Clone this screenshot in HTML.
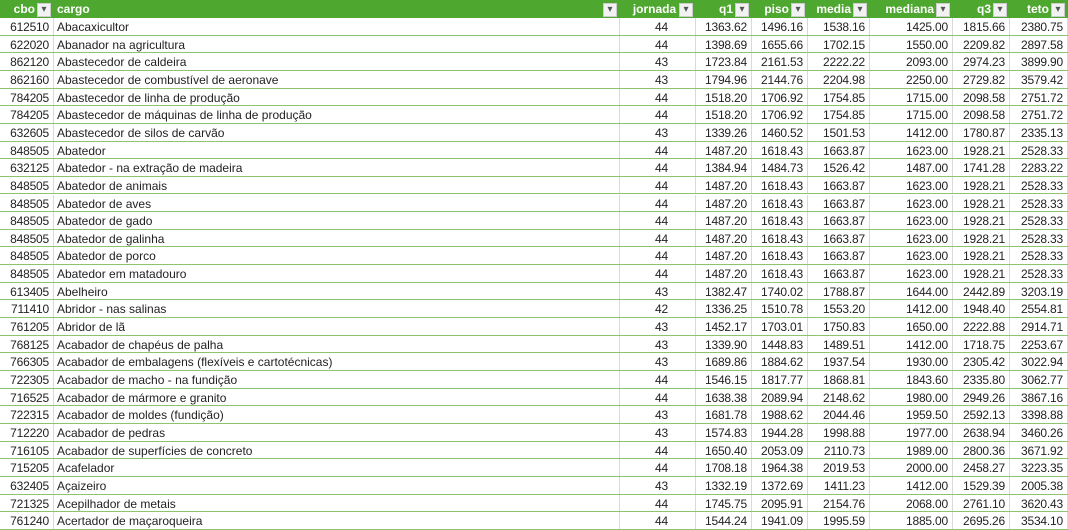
<!DOCTYPE html>
<html><head><meta charset="utf-8"><style>
*{margin:0;padding:0;box-sizing:border-box}
body{width:1068px;height:526px;overflow:hidden;background:#fff;font-family:"Liberation Sans",Arial,sans-serif;font-size:12px;color:#222;position:relative}
.r{position:absolute;left:0;width:1068px;display:grid;grid-template-columns:54px 566px 76px 56px 56px 62px 83px 57px 58px;border-bottom:1px solid #8cc56e}
.r div{border-right:1px solid #d9d9d9;padding:1px 4px 0;line-height:17px;white-space:nowrap;overflow:hidden;text-align:right;letter-spacing:-0.2px}
.r div:nth-child(2){text-align:left;padding-left:3px;letter-spacing:0}
.r div:nth-child(3){text-align:center;padding-left:12px}
.h{top:0;height:18px;background:#4ea72e;color:#fff;font-weight:bold;border-bottom:none}
.h div{border-right:none;position:relative;padding:0 19px 0 3px;line-height:18px;letter-spacing:0}
.h div::after{content:"▾";position:absolute;right:3px;top:3px;width:12px;height:12px;background:#f2f2f2;color:#555;font-size:10px;line-height:12px;text-align:center;border:1px solid #ccc;font-weight:normal}
</style></head><body>
<div class="r h"><div>cbo</div><div>cargo</div><div>jornada</div><div>q1</div><div>piso</div><div>media</div><div>mediana</div><div>q3</div><div>teto</div></div>
<div id="t"></div>
<script>
var d=`612510|Abacaxicultor|44|1363.62|1496.16|1538.16|1425.00|1815.66|2380.75
622020|Abanador na agricultura|44|1398.69|1655.66|1702.15|1550.00|2209.82|2897.58
862120|Abastecedor de caldeira|43|1723.84|2161.53|2222.22|2093.00|2974.23|3899.90
862160|Abastecedor de combustível de aeronave|43|1794.96|2144.76|2204.98|2250.00|2729.82|3579.42
784205|Abastecedor de linha de produção|44|1518.20|1706.92|1754.85|1715.00|2098.58|2751.72
784205|Abastecedor de máquinas de linha de produção|44|1518.20|1706.92|1754.85|1715.00|2098.58|2751.72
632605|Abastecedor de silos de carvão|43|1339.26|1460.52|1501.53|1412.00|1780.87|2335.13
848505|Abatedor|44|1487.20|1618.43|1663.87|1623.00|1928.21|2528.33
632125|Abatedor - na extração de madeira|44|1384.94|1484.73|1526.42|1487.00|1741.28|2283.22
848505|Abatedor de animais|44|1487.20|1618.43|1663.87|1623.00|1928.21|2528.33
848505|Abatedor de aves|44|1487.20|1618.43|1663.87|1623.00|1928.21|2528.33
848505|Abatedor de gado|44|1487.20|1618.43|1663.87|1623.00|1928.21|2528.33
848505|Abatedor de galinha|44|1487.20|1618.43|1663.87|1623.00|1928.21|2528.33
848505|Abatedor de porco|44|1487.20|1618.43|1663.87|1623.00|1928.21|2528.33
848505|Abatedor em matadouro|44|1487.20|1618.43|1663.87|1623.00|1928.21|2528.33
613405|Abelheiro|43|1382.47|1740.02|1788.87|1644.00|2442.89|3203.19
711410|Abridor - nas salinas|42|1336.25|1510.78|1553.20|1412.00|1948.40|2554.81
761205|Abridor de lã|43|1452.17|1703.01|1750.83|1650.00|2222.88|2914.71
768125|Acabador de chapéus de palha|43|1339.90|1448.83|1489.51|1412.00|1718.75|2253.67
766305|Acabador de embalagens (flexíveis e cartotécnicas)|43|1689.86|1884.62|1937.54|1930.00|2305.42|3022.94
722305|Acabador de macho - na fundição|44|1546.15|1817.77|1868.81|1843.60|2335.80|3062.77
716525|Acabador de mármore e granito|44|1638.38|2089.94|2148.62|1980.00|2949.26|3867.16
722315|Acabador de moldes (fundição)|43|1681.78|1988.62|2044.46|1959.50|2592.13|3398.88
712220|Acabador de pedras|43|1574.83|1944.28|1998.88|1977.00|2638.94|3460.26
716105|Acabador de superfícies de concreto|44|1650.40|2053.09|2110.73|1989.00|2800.36|3671.92
715205|Acafelador|44|1708.18|1964.38|2019.53|2000.00|2458.27|3223.35
632405|Açaizeiro|43|1332.19|1372.69|1411.23|1412.00|1529.39|2005.38
721325|Acepilhador de metais|44|1745.75|2095.91|2154.76|2068.00|2761.10|3620.43
761240|Acertador de maçaroqueira|44|1544.24|1941.09|1995.59|1885.00|2695.26|3534.10`.split("\n");
var h="";d.forEach(function(l,i){h+='<div class="r" style="top:'+(18+i*17.65).toFixed(2)+'px;height:17.65px"><div>'+l.split("|").join("</div><div>")+'</div></div>';});
document.getElementById("t").innerHTML=h;
</script>
</body></html>
